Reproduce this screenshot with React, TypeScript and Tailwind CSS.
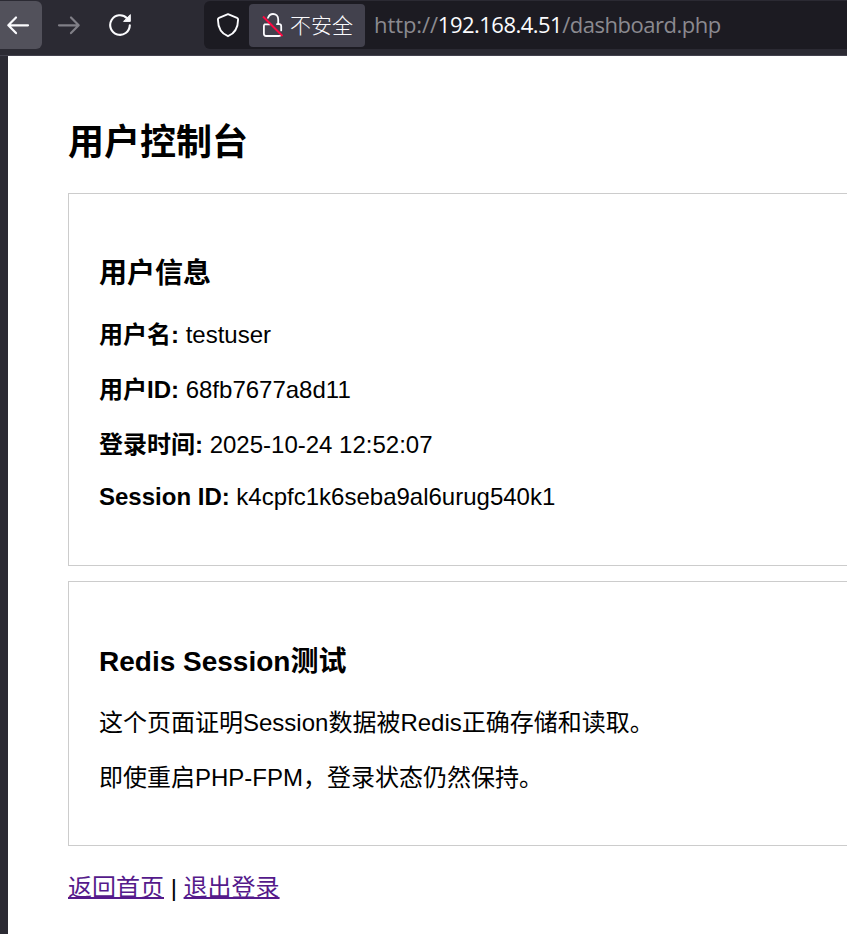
import type { ReactNode } from "react";

const userInfo = [
  { label: "用户名:", value: "testuser" },
  { label: "用户ID:", value: "68fb7677a8d11" },
  { label: "登录时间:", value: "2025-10-24 12:52:07" },
];

function BackIcon() {
  return (
    <svg width="24" height="24" viewBox="0 0 24 24" fill="none" stroke="currentColor" strokeWidth="2.2" strokeLinecap="round" strokeLinejoin="round">
      <path d="M22 12.3H2.5M10 4.5L2.3 12.3 10 20.1" />
    </svg>
  );
}

function ForwardIcon() {
  return (
    <svg width="24" height="24" viewBox="0 0 24 24" fill="none" stroke="currentColor" strokeWidth="2.2" strokeLinecap="round" strokeLinejoin="round">
      <path d="M2 12.3h19.5M14 4.5l7.7 7.8-7.7 7.8" />
    </svg>
  );
}

function ReloadIcon() {
  return (
    <svg width="24" height="24" viewBox="0 0 24 24" fill="none" stroke="currentColor" strokeWidth="2.1" strokeLinecap="round">
      <path d="M21.8 12.4A9.8 9.8 0 1 1 19 5.2" />
      <path d="M22.3 2v6.4h-6.4z" fill="currentColor" strokeWidth="1" strokeLinejoin="round" />
    </svg>
  );
}

function ShieldIcon() {
  return (
    <svg width="24" height="26" viewBox="0 0 24 26" fill="none" stroke="currentColor" strokeWidth="1.9" strokeLinejoin="round">
      <path d="M12 2.2l9 3.6c.8.3 1.1.8 1.1 1.6C22 15.5 18.5 21.5 12 24.2 5.5 21.5 2 15.5 1.9 7.4c0-.8.3-1.3 1.1-1.6z" />
    </svg>
  );
}

function InsecureLockIcon() {
  return (
    <svg width="24" height="26" viewBox="0 0 24 26" fill="none">
      <g stroke="#fbfbfe" strokeWidth="1.8" strokeLinecap="round">
        <path d="M7 5.8C8 3.2 9.800 2 12 2c3 0 5.200 2.200 5.200 5.200v5" />
        <path d="M8.600 12.400h-5c-.5.400-.7.900-.7 1.600v7.800c0 1.300.8 2.200 2.200 2.200h12.800c.9 0 1.600-.3 2-.9M16 12.200h2.200c1.300 0 2 .8 2 2v4.200" />
      </g>
      <path d="M2 4.500L21.500 24" stroke="#ff0a43" strokeWidth="2" />
    </svg>
  );
}

function BrowserBar() {
  return (
    <header className="flex h-14 items-start border-b border-[#42414d] bg-[#2b2a33] pt-px text-[#fbfbfe]">
      <button className="flex h-12 w-[42px] items-center rounded-r-md bg-[#52515b] pl-[6px]" aria-label="Back">
        <BackIcon />
      </button>
      <button className="ml-[15px] flex h-12 items-center text-[#807f87]" aria-label="Forward">
        <ForwardIcon />
      </button>
      <button className="ml-[27px] flex h-12 items-center" aria-label="Reload">
        <ReloadIcon />
      </button>
      <div className="ml-[72px] flex h-12 flex-1 items-center rounded-l-md bg-[#1c1b22] pl-3">
        <ShieldIcon />
        <div className="ml-[9px] flex h-[43px] w-[116px] items-center rounded bg-[#42414d] pl-3">
          <InsecureLockIcon />
          <span className="ml-[5px] whitespace-nowrap pb-0.5 font-['Noto_Sans_CJK_SC',sans-serif] text-[21px] font-light leading-8">
            不安全
          </span>
        </div>
        <div className="ml-[9px] whitespace-nowrap pb-0.5 font-['Open_Sans',sans-serif] text-[22px] leading-8 tracking-[-0.48px] text-[#8b8a90]">
          <span className="tracking-[-0.1px]">http://</span>
          <span className="tracking-[-0.52px] text-[#fbfbfe]">192.168.4.51</span>
          /dashboard.php
        </div>
      </div>
    </header>
  );
}

function Card({ title, children }: { title: string; children: ReactNode }) {
  return (
    <section className="mb-[15px] border border-r-0 border-[#ccc] px-[30px] pb-[52px] pt-[61px]">
      <h3 className="mb-[26px] text-[28px] font-bold leading-[38px]">{title}</h3>
      <div className="flex flex-col gap-6">{children}</div>
    </section>
  );
}

export default function App() {
  return (
    <div className="h-[934px] overflow-hidden bg-[#2b2a33]">
      <BrowserBar />
      <main className="ml-2 h-[878px] bg-white pl-[60px] pt-[63px] font-['Liberation_Sans','Noto_Sans_CJK_SC',sans-serif] text-2xl leading-[31px] text-black">
        <h2 className="mb-[26px] text-4xl font-bold leading-12">用户控制台</h2>

        <Card title="用户信息">
          {userInfo.map((item) => (
            <p key={item.label}>
              <strong>{item.label}</strong> {item.value}
            </p>
          ))}
          <p className="mb-1 leading-[25px]">
            <strong>Session ID:</strong> k4cpfc1k6seba9al6urug540k1
          </p>
        </Card>

        <Card title="Redis Session测试">
          <p>这个页面证明Session数据被Redis正确存储和读取。</p>
          <p>即使重启PHP-FPM，登录状态仍然保持。</p>
        </Card>

        <nav className="pt-[11px]">
          <a href="#home" className="text-[#551a8b] underline decoration-2">返回首页</a>
          {" | "}
          <a href="#logout" className="text-[#551a8b] underline decoration-2">退出登录</a>
        </nav>
      </main>
    </div>
  );
}
